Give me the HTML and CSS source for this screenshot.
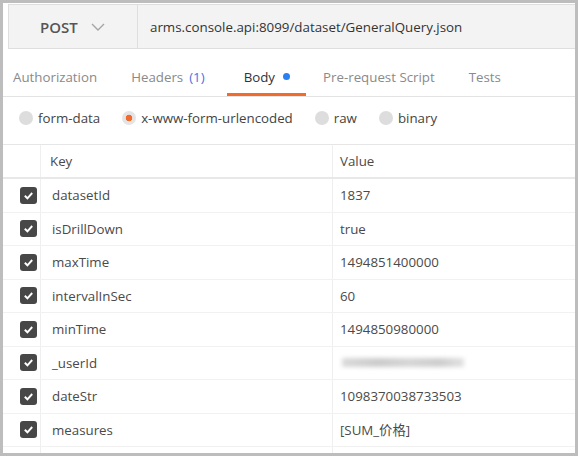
FILE: index.html
```html
<!DOCTYPE html>
<html lang="en">
<head>
	<meta charset="UTF-8">
	<title>Request body</title>
	<link rel="stylesheet" href="styles.css">
</head>
<body>
	<div class="frame">
		<div class="urlbar">
			<div class="method">
				<span>POST</span>
				<svg class="chevron" width="14" height="8" viewBox="0 0 14 8"><polyline points="1,1 7,7 13,1" fill="none" stroke="#a5a5a5" stroke-width="1.4"/></svg>
			</div>
			<div class="url">arms.console.api:8099/dataset/GeneralQuery.json</div>
		</div>

		<div class="tabs">
			<div class="tab first">Authorization</div>
			<div class="tab headers">Headers <span class="count">(1)</span></div>
			<div class="tab active">Body <span class="dot"></span></div>
			<div class="tab">Pre-request Script</div>
			<div class="tab">Tests</div>
		</div>

		<div class="bodytypes">
			<div class="opt"><span class="radio"></span>form-data</div>
			<div class="opt"><span class="radio on"></span>x-www-form-urlencoded</div>
			<div class="opt"><span class="radio"></span>raw</div>
			<div class="opt"><span class="radio"></span>binary</div>
		</div>

		<div class="params">
			<div class="row head">
				<div class="cell chk"></div>
				<div class="cell key">Key</div>
				<div class="cell val">Value</div>
			</div>
			<div class="row">
				<div class="cell chk"><span class="box"><svg width="17" height="17" viewBox="0 0 17 17"><polyline points="4.8,8.8 7.4,11.3 12.2,6" fill="none" stroke="#fff" stroke-width="1.9"/></svg></span></div>
				<div class="cell key">datasetId</div>
				<div class="cell val">1837</div>
			</div>
			<div class="row">
				<div class="cell chk"><span class="box"><svg width="17" height="17" viewBox="0 0 17 17"><polyline points="4.8,8.8 7.4,11.3 12.2,6" fill="none" stroke="#fff" stroke-width="1.9"/></svg></span></div>
				<div class="cell key">isDrillDown</div>
				<div class="cell val">true</div>
			</div>
			<div class="row">
				<div class="cell chk"><span class="box"><svg width="17" height="17" viewBox="0 0 17 17"><polyline points="4.8,8.8 7.4,11.3 12.2,6" fill="none" stroke="#fff" stroke-width="1.9"/></svg></span></div>
				<div class="cell key">maxTime</div>
				<div class="cell val">1494851400000</div>
			</div>
			<div class="row">
				<div class="cell chk"><span class="box"><svg width="17" height="17" viewBox="0 0 17 17"><polyline points="4.8,8.8 7.4,11.3 12.2,6" fill="none" stroke="#fff" stroke-width="1.9"/></svg></span></div>
				<div class="cell key">intervalInSec</div>
				<div class="cell val">60</div>
			</div>
			<div class="row">
				<div class="cell chk"><span class="box"><svg width="17" height="17" viewBox="0 0 17 17"><polyline points="4.8,8.8 7.4,11.3 12.2,6" fill="none" stroke="#fff" stroke-width="1.9"/></svg></span></div>
				<div class="cell key">minTime</div>
				<div class="cell val">1494850980000</div>
			</div>
			<div class="row">
				<div class="cell chk"><span class="box"><svg width="17" height="17" viewBox="0 0 17 17"><polyline points="4.8,8.8 7.4,11.3 12.2,6" fill="none" stroke="#fff" stroke-width="1.9"/></svg></span></div>
				<div class="cell key">_userId</div>
				<div class="cell val"><span class="blurred"></span></div>
			</div>
			<div class="row">
				<div class="cell chk"><span class="box"><svg width="17" height="17" viewBox="0 0 17 17"><polyline points="4.8,8.8 7.4,11.3 12.2,6" fill="none" stroke="#fff" stroke-width="1.9"/></svg></span></div>
				<div class="cell key">dateStr</div>
				<div class="cell val">1098370038733503</div>
			</div>
			<div class="row">
				<div class="cell chk"><span class="box"><svg width="17" height="17" viewBox="0 0 17 17"><polyline points="4.8,8.8 7.4,11.3 12.2,6" fill="none" stroke="#fff" stroke-width="1.9"/></svg></span></div>
				<div class="cell key">measures</div>
				<div class="cell val">[SUM_价格]</div>
			</div>
			<div class="row">
				<div class="cell chk"></div>
				<div class="cell key"></div>
				<div class="cell val"></div>
			</div>
		</div>
	</div>
</body>
</html>
```

FILE: styles.css
```css
*{
	padding: 0;
	margin: 0;
	box-sizing: border-box;
}
body{
	font-family: "Open Sans", "Noto Sans CJK SC", sans-serif;
	font-size: 13.3px;
	color: #505050;
	background: #bdbdbd;
}
.frame{
	width: 578px;
	height: 456px;
	border: 3px solid #bdbdbd;
	background: #fff;
	overflow: hidden;
}
.urlbar{
	display: flex;
	height: 45px;
	margin: 1px 0 0 5px;
	border: 1px solid #dedede;
	border-right: 0;
	background: #f3f3f3;
}
.method{
	display: flex;
	align-items: center;
	width: 129px;
	padding-left: 31px;
	border-right: 1px solid #dedede;
	font-size: 15px;
	font-weight: 600;
	color: #555;
}
.chevron{
	margin-left: 13px;
}
.url{
	display: flex;
	align-items: center;
	padding-left: 12px;
	font-size: 13.35px;
	color: #333;
}
.tabs{
	display: flex;
	height: 48px;
	padding-left: 10px;
	border-bottom: 1px solid #e3e3e3;
}
.tab{
	display: flex;
	align-items: center;
	padding: 11px 17px 0;
	border-bottom: 3px solid transparent;
	color: #8a8a8a;
	white-space: nowrap;
}
.tab.first{
	padding-left: 0;
}
.tab.headers{
	padding-right: 22px;
}
.tab.active{
	padding-right: 16px;
	border-bottom-color: #f26b2a;
	color: #333;
}
.count{
	margin-left: 6px;
	color: #4f70e0;
}
.dot{
	display: inline-block;
	width: 7px;
	height: 7px;
	margin-left: 8px;
	border-radius: 50%;
	background: #2c7ff0;
}
.bodytypes{
	display: flex;
	align-items: center;
	gap: 22px;
	height: 48px;
	padding: 0 0 5px 16px;
	border-bottom: 1px solid #e6e6e6;
	color: #444;
}
.opt{
	display: flex;
	align-items: center;
}
.radio{
	display: inline-block;
	width: 14px;
	height: 14px;
	margin-right: 5px;
	border-radius: 50%;
	background: #dddddd;
}
.radio.on{
	background: radial-gradient(circle, #f26b2a 0 3px, #e4e4e4 3.6px);
}
.row{
	display: grid;
	grid-template-columns: 37px 292px 1fr;
	height: 33.5px;
	border-bottom: 1px solid #f1f1f1;
}
.row.head{
	height: 34px;
	border-bottom: 2px solid #e8e8e8;
	color: #555;
}
.cell{
	display: flex;
	align-items: center;
}
.chk{
	justify-content: flex-end;
	padding-right: 3px;
}
.key{
	padding-left: 11px;
	border-left: 1px solid #efefef;
	color: #4a4a4a;
}
.val{
	padding-left: 7px;
	border-left: 1px solid #efefef;
	color: #4a4a4a;
}
.head .key{
	padding-left: 9px;
}
.box{
	display: block;
	width: 17px;
	height: 17px;
	border-radius: 3px;
	background: #474747;
}
.box svg{
	display: block;
}
.blurred{
	display: block;
	width: 122px;
	height: 9px;
	margin-left: 2px;
	background: linear-gradient(90deg, #dadada, #cbcbcb 30%, #d6d6d6 55%, #cdcdcd 80%, #e2e2e2);
	filter: blur(2px);
}
```
